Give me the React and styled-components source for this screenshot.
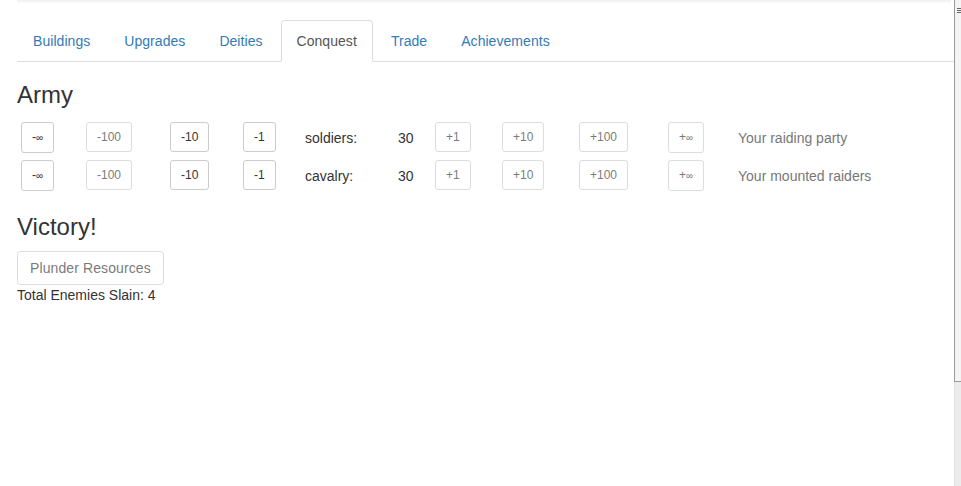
import React from "react";
import styled, { createGlobalStyle } from "styled-components";

const GlobalStyle = createGlobalStyle`
  html, body {
    margin: 0;
    padding: 0;
    background: #fff;
  }
  body {
    font-family: "Liberation Sans", Arial, sans-serif;
    font-size: 14px;
    line-height: 1.42857;
    color: #333;
  }
`;

const Page = styled.div`
  display: flex;
  height: 486px;
  overflow: hidden;
`;

const Main = styled.div`
  flex: 1;
  padding-left: 17px;
`;

const TopShade = styled.div`
  height: 3px;
  margin-right: 3px;
  background: linear-gradient(#f0f0f0, #fbfbfb);
`;

const Scrollbar = styled.div`
  width: 7px;
  display: flex;
  flex-direction: column;
`;

const Thumb = styled.div`
  height: 373px;
  border-left: 1px solid #9a9a9a;
  border-bottom: 1px solid #9a9a9a;
  background: #f4f4f4;
  padding: 8px 0 0 2px;
`;

const Grip = styled.div`
  width: 4px;
  height: 1px;
  margin-bottom: 1px;
  background: #666;
`;

const Track = styled.div`
  flex: 1;
  background: #ececec;
  border-left: 1px solid #e2e2e2;
`;

const Tabs = styled.ul`
  list-style: none;
  margin: 17px 0 0;
  padding: 0;
  display: flex;
  border-bottom: 1px solid #ddd;
`;

const Tab = styled.li`
  margin-bottom: -1px;
  margin-right: 2px;
`;

const TabLink = styled.a`
  display: block;
  padding: 10px 15px;
  line-height: 20px;
  letter-spacing: 0.05px;
  border: 1px solid ${(p) => (p.$active ? "#ddd" : "transparent")};
  border-bottom-color: ${(p) => (p.$active ? "#fff" : "transparent")};
  border-radius: 4px 4px 0 0;
  background: ${(p) => (p.$active ? "#fff" : "transparent")};
  color: ${(p) => (p.$active ? "#555" : "#337ab7")};
  text-decoration: none;
  cursor: pointer;
`;

const Heading = styled.h3`
  font-size: 24px;
  font-weight: 500;
  line-height: 1.1;
  margin: 20px 0 10px;
`;

const Grid = styled.div`
  display: grid;
  grid-template-columns: 65px 84px 73px 62px 93px 37px 67px 77px 89px 70px 1fr;
  grid-auto-rows: 38px;
  margin-bottom: 20px;
`;

const Cell = styled.div`
  padding: ${(p) => (p.$text ? "6px 4px 2px" : "4px")};
  display: flex;
  align-items: center;
  color: ${(p) => (p.$muted ? "#777" : "#333")};
  white-space: nowrap;
`;

const SmallButton = styled.button`
  font-family: inherit;
  font-size: 12px;
  line-height: 18px;
  padding: 5px 10px;
  border: 1px solid #ccc;
  border-radius: 3px;
  background: #fff;
  color: #333;
  opacity: ${(p) => (p.disabled ? 0.65 : 1)};
  cursor: ${(p) => (p.disabled ? "not-allowed" : "pointer")};
`;

const Inf = styled.span`
  font-size: 10px;
`;

const Button = styled.button`
  font-family: inherit;
  font-size: 14px;
  line-height: 20px;
  letter-spacing: 0.1px;
  padding: 6px 12px;
  border: 1px solid #ccc;
  border-radius: 4px;
  background: #fff;
  color: #333;
  opacity: ${(p) => (p.disabled ? 0.65 : 1)};
`;

const Note = styled.div`
  line-height: 20px;
`;

const tabs = ["Buildings", "Upgrades", "Deities", "Conquest", "Trade", "Achievements"];

const units = [
  { name: "soldiers:", count: 30, desc: "Your raiding party" },
  { name: "cavalry:", count: 30, desc: "Your mounted raiders" },
];

const minus = [
  { label: <>-<Inf>∞</Inf></>, off: false },
  { label: "-100", off: true },
  { label: "-10", off: false },
  { label: "-1", off: false },
];

const plus = [
  { label: "+1", off: true },
  { label: "+10", off: true },
  { label: "+100", off: true },
  { label: <>+<Inf>∞</Inf></>, off: true },
];

const App = () => (
  <>
    <GlobalStyle />
    <Page>
      <Main>
        <TopShade />
        <Tabs>
          {tabs.map((t) => (
            <Tab key={t}>
              <TabLink $active={t === "Conquest"}>{t}</TabLink>
            </Tab>
          ))}
        </Tabs>
        <Heading>Army</Heading>
        <Grid>
          {units.map((u) => (
            <React.Fragment key={u.name}>
              {minus.map((b, i) => (
                <Cell key={"m" + i}>
                  <SmallButton disabled={b.off}>{b.label}</SmallButton>
                </Cell>
              ))}
              <Cell $text>{u.name}</Cell>
              <Cell $text>{u.count}</Cell>
              {plus.map((b, i) => (
                <Cell key={"p" + i}>
                  <SmallButton disabled={b.off}>{b.label}</SmallButton>
                </Cell>
              ))}
              <Cell $text $muted>{u.desc}</Cell>
            </React.Fragment>
          ))}
        </Grid>
        <Heading>Victory!</Heading>
        <Button disabled>Plunder Resources</Button>
        <Note>Total Enemies Slain: 4</Note>
      </Main>
      <Scrollbar>
        <Thumb>
          <Grip />
          <Grip />
          <Grip />
        </Thumb>
        <Track />
      </Scrollbar>
    </Page>
  </>
);

export default App;
